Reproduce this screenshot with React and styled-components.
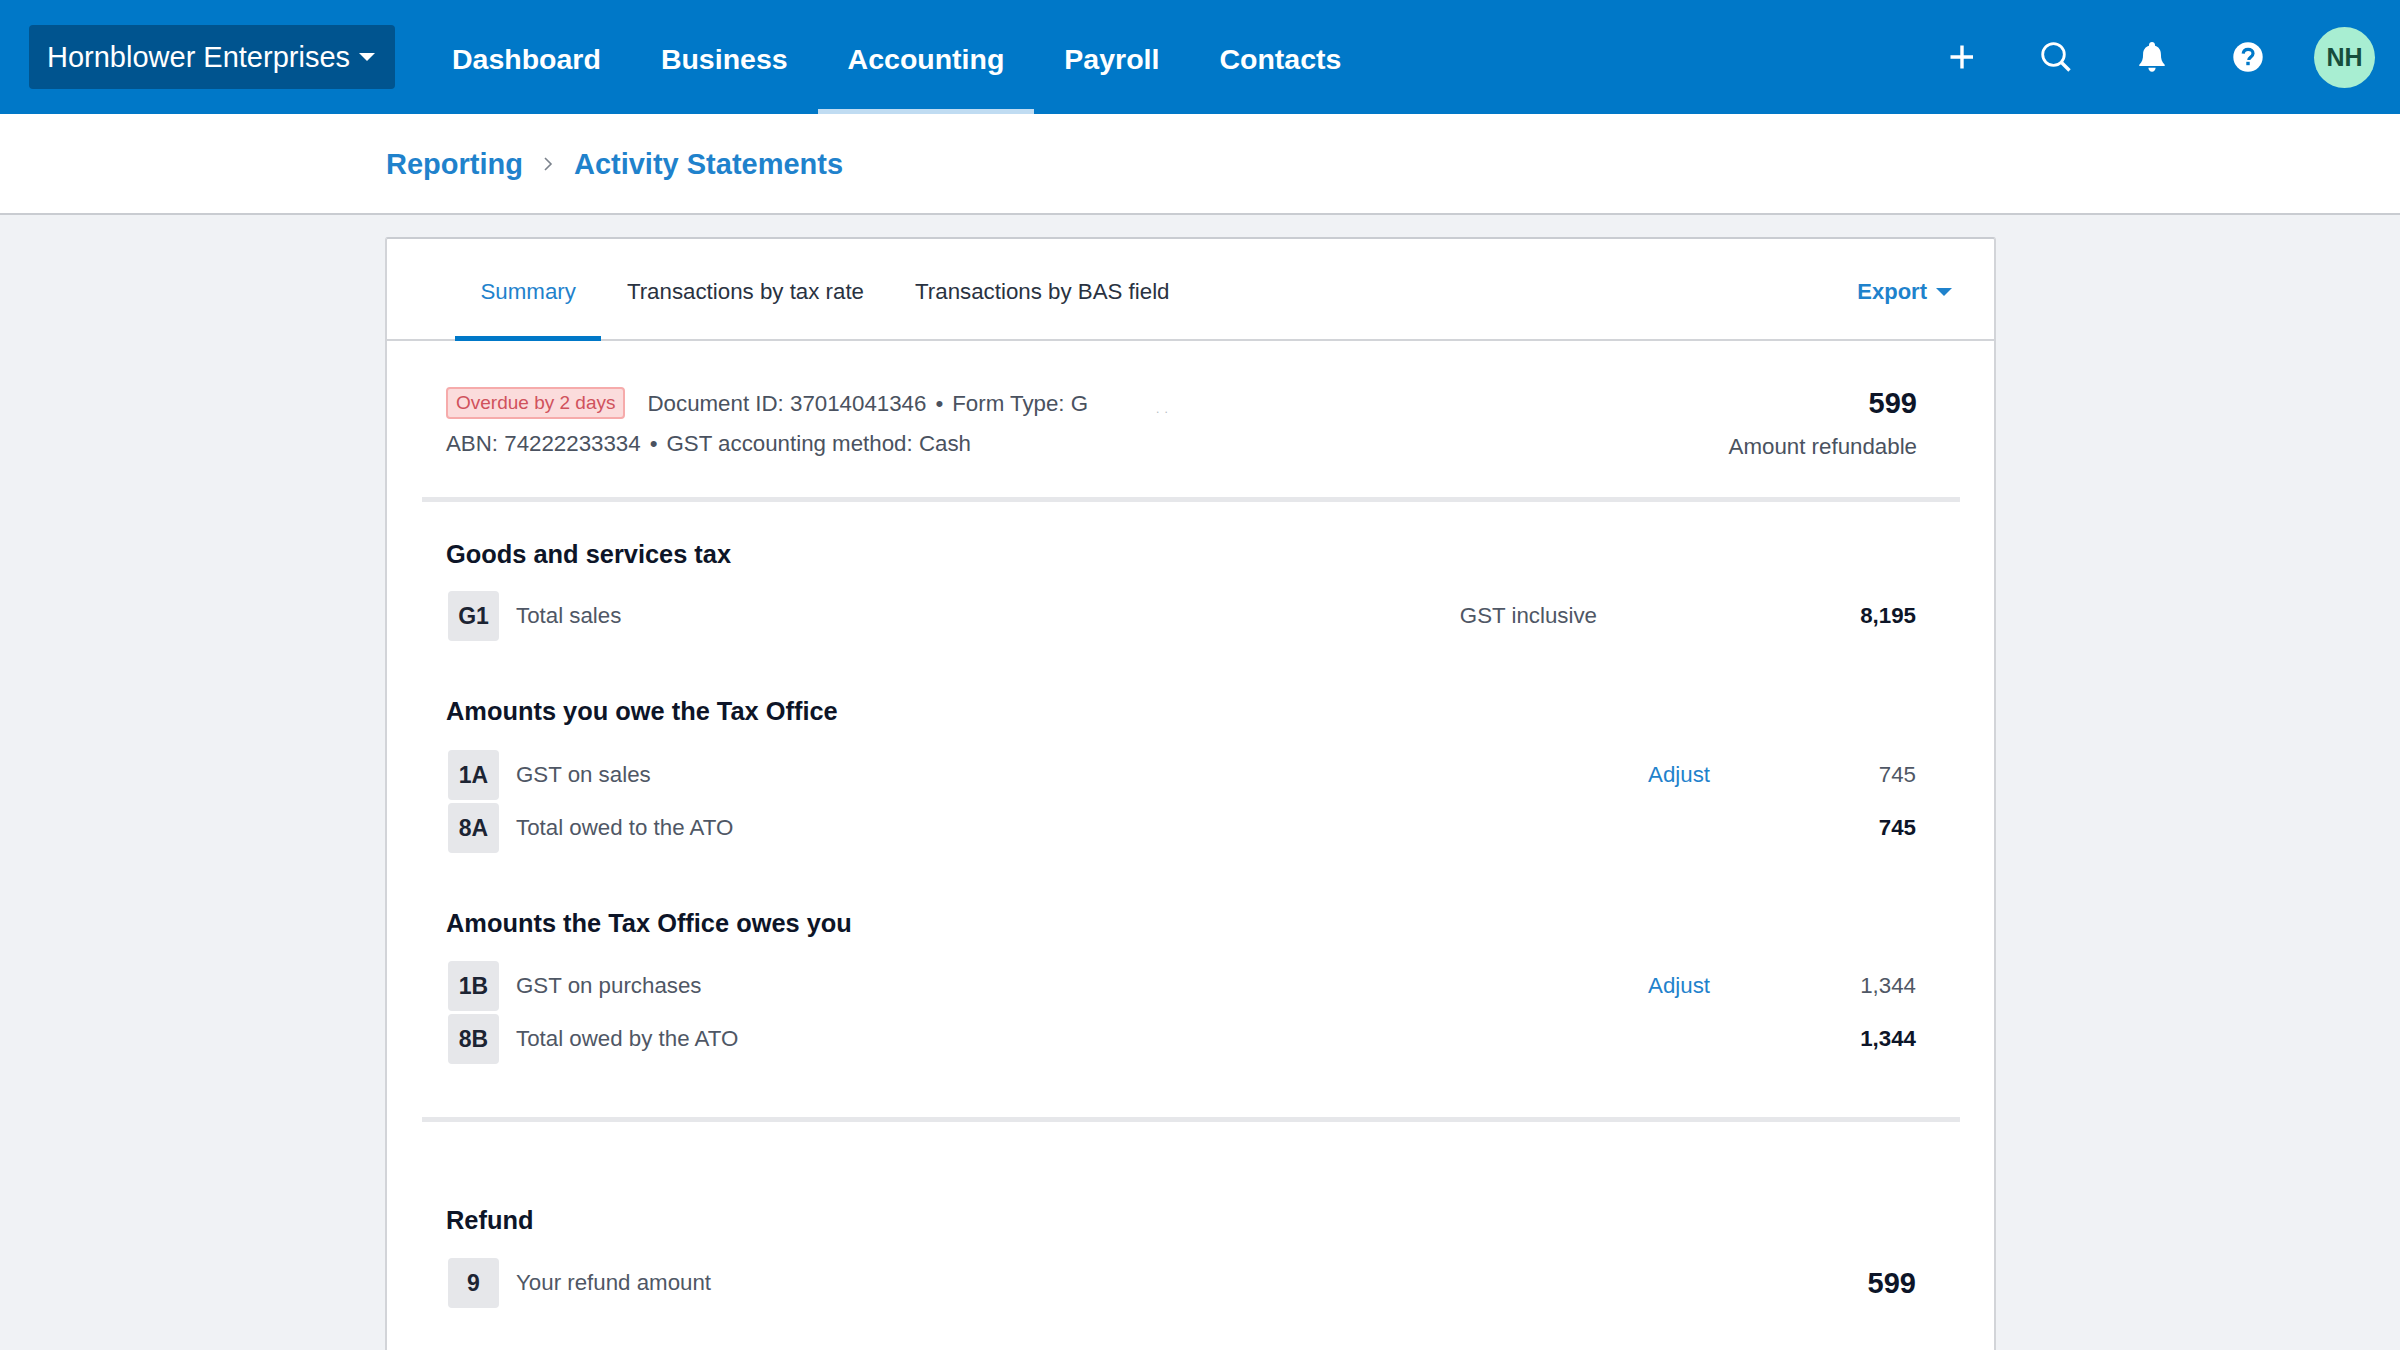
import React from 'react';
import styled, { createGlobalStyle } from 'styled-components';

const GlobalStyle = createGlobalStyle`
  html, body {
    margin: 0;
    height: 1350px;
    overflow: hidden;
    background: #f0f2f5;
    font-family: "Liberation Sans", Arial, sans-serif;
  }
`;

const TopNav = styled.header`
  display: flex;
  align-items: center;
  height: 114px;
  padding: 0 25px 0 29px;
  background: #0078c8;
  color: #fff;
`;

const OrgButton = styled.button`
  display: flex;
  align-items: center;
  gap: 9px;
  width: 366px;
  height: 64px;
  padding: 0 0 0 18px;
  margin-right: 27px;
  border: 0;
  border-radius: 4px;
  background: #00548f;
  color: #fff;
  font: 29px "Liberation Sans", Arial, sans-serif;
`;

const Caret = styled.span`
  width: 0;
  height: 0;
  border-left: ${p => p.$size}px solid transparent;
  border-right: ${p => p.$size}px solid transparent;
  border-top: ${p => p.$size}px solid ${p => p.$color};
`;

const NavItem = styled.a`
  display: flex;
  align-items: center;
  align-self: stretch;
  padding: 9px 30px 0;
  font-size: 28.5px;
  font-weight: 700;
  border-bottom: 5px solid ${p => (p.$active ? '#c0dcf2' : 'transparent')};
`;

const NavIcons = styled.div`
  display: flex;
  align-items: center;
  margin-left: auto;
`;

const IconSlot = styled.span`
  display: flex;
  justify-content: center;
  width: 96px;
  svg { display: block; }
`;

const Avatar = styled.span`
  display: flex;
  align-items: center;
  justify-content: center;
  width: 61px;
  height: 61px;
  margin-left: 18px;
  border-radius: 50%;
  background: #a8eed2;
  color: #174d3c;
  font-size: 25px;
  font-weight: 700;
`;

const Crumbs = styled.nav`
  display: flex;
  align-items: center;
  height: 98px;
  padding: 1px 0 0 386px;
  background: #fff;
  border-bottom: 2px solid #c9ccd1;
  color: #1f82cc;
  font-size: 29px;
  font-weight: 700;
`;

const CrumbSep = styled.span`
  width: 10px;
  margin: 0 21px 0 20px;
  svg { display: block; }
`;

const Card = styled.main`
  width: 1611px;
  height: 1113px;
  margin: 22px 0 0 385px;
  box-sizing: border-box;
  background: #fff;
  border: 2px solid #d2d4d8;
  border-top-color: #c9ccd1;
  border-bottom: 0;
  border-radius: 3px 3px 0 0;
`;

const TabBar = styled.div`
  display: flex;
  align-items: stretch;
  height: 100px;
  padding: 0 42px 0 68px;
  border-bottom: 2px solid #d2d4d8;
`;

const Tab = styled.a`
  display: flex;
  align-items: center;
  margin-bottom: -2px;
  padding: 9px 25.5px 0;
  font-size: 22.3px;
  color: ${p => (p.$active ? '#1f82cc' : '#293241')};
  border-bottom: 5px solid ${p => (p.$active ? '#0078c8' : 'transparent')};
`;

const ExportLink = styled.a`
  display: flex;
  align-items: center;
  gap: 9px;
  margin-left: auto;
  padding-top: 5px;
  color: #1f82cc;
  font-size: 22px;
  font-weight: 700;
`;

const Meta = styled.section`
  display: flex;
  justify-content: space-between;
  height: 156px;
  box-sizing: border-box;
  padding: 46px 77px 0 59px;
`;

const MetaLine = styled.div`
  display: flex;
  align-items: center;
  height: 32px;
  margin-bottom: 8px;
  font-size: 22.3px;
  color: #4a5260;
`;

const MetaText = styled.span`
  padding-top: 2px;
`;

const MetaDot = styled.span`
  margin: 0 9px;
`;

const Overdue = styled.span`
  display: flex;
  align-items: center;
  height: 32px;
  box-sizing: border-box;
  padding: 0 8px;
  margin-right: 22px;
  background: #fbdcdc;
  border: 2px solid #f6abab;
  border-radius: 4px;
  color: #d0525c;
  font-size: 19px;
`;

const Blemish = styled.span`
  margin: 12px 0 0 68px;
  color: #b4bac2;
  font-size: 12px;
  letter-spacing: 5px;
`;

const Totals = styled.div`
  text-align: right;
`;

const BigAmount = styled.div`
  font-size: 29px;
  font-weight: 700;
  line-height: 32px;
  color: #0d1528;
`;

const TotalsLabel = styled.div`
  margin-top: 12px;
  font-size: 22.3px;
  line-height: 32px;
  color: #4a5260;
`;

const Divider = styled.hr`
  height: 5px;
  margin: ${p => p.$top || 0}px 34px 0 35px;
  border: 0;
  background: #e6e7ea;
`;

const Section = styled.section`
  padding: 0 78px 0 59px;
  margin-top: ${p => p.$top}px;
`;

const Heading = styled.h2`
  margin: 0 0 ${p => p.$gap || 23}px;
  font-size: 25.4px;
  line-height: 30px;
  font-weight: 700;
  color: #0d1528;
`;

const Row = styled.div`
  display: flex;
  align-items: center;
  height: 50px;
  margin-bottom: 3px;
  font-size: 22.3px;
  color: #4f5765;
`;

const Chip = styled.span`
  display: flex;
  align-items: center;
  justify-content: center;
  flex: none;
  width: 51px;
  height: 50px;
  margin: 0 17px 0 2px;
  border-radius: 4px;
  background: #e6e7ea;
  color: #1c2433;
  font-size: 23px;
  font-weight: 700;
`;

const RowLabel = styled.span`
  flex: 1;
`;

const RowNote = styled.span`
  margin-right: ${p => p.$right}px;
  color: ${p => (p.$link ? '#1f82cc' : '#4f5765')};
`;

const Amount = styled.span`
  flex: 0 0 206px;
  text-align: right;
  font-size: ${p => (p.$large ? 29 : 22.3)}px;
  font-weight: ${p => (p.$bold ? 700 : 400)};
  color: ${p => (p.$bold ? '#0d1528' : '#4f5765')};
`;

const PlusIcon = () => (
  <svg width="26" height="26" viewBox="-2 0 26 26" fill="none" stroke="#fff" strokeWidth="3.4">
    <path d="M13 1.5v23M1.5 13h23" />
  </svg>
);

const SearchIcon = () => (
  <svg width="30" height="30" viewBox="0 0 30 30" fill="none" stroke="#fff">
    <circle cx="12.5" cy="12.5" r="10.8" strokeWidth="2.8" />
    <path d="M20.5 20.5l8 8" strokeWidth="3.4" />
  </svg>
);

const BellIcon = () => (
  <svg width="26" height="30" viewBox="0 0 26 30" fill="#fff">
    <path d="M13 0c1.7 0 3 1.2 3 2.9v.8c3.9 1.2 5.9 4.4 5.9 8.3 0 5 1 8 3.6 10.4.5.5.5 1.6-.7 1.6H1.2c-1.2 0-1.2-1.1-.7-1.6C3.1 20 4.1 17 4.1 12c0-3.9 2-7.1 5.9-8.3v-.8C10 1.2 11.3 0 13 0z" />
    <path d="M9.4 25.7h7.2c0 2.3-1.6 4-3.6 4s-3.6-1.7-3.6-4z" />
  </svg>
);

const HelpIcon = () => (
  <svg width="30" height="30" viewBox="0 0 30 30">
    <circle cx="15" cy="15" r="14.7" fill="#fff" />
    <path d="M10.2 11.6c.3-2.8 2.2-4.2 4.9-4.2 2.9 0 4.9 1.6 4.9 4 0 3.5-4 3.6-4.2 6.6" fill="none" stroke="#0078c8" strokeWidth="3.2" />
    <rect x="13.3" y="19.8" width="3.4" height="3.4" fill="#0078c8" />
  </svg>
);

const ChevronIcon = () => (
  <svg width="10" height="16" viewBox="0 0 10 16" fill="none" stroke="#7b828c" strokeWidth="1.6">
    <path d="M2 2l6 6-6 6" />
  </svg>
);

const navItems = ['Dashboard', 'Business', 'Accounting', 'Payroll', 'Contacts'];
const tabs = ['Summary', 'Transactions by tax rate', 'Transactions by BAS field'];

const StatementRow = ({ code, label, note, noteRight = 0, link, amount, bold, large }) => (
  <Row>
    <Chip>{code}</Chip>
    <RowLabel>{label}</RowLabel>
    {note && <RowNote $right={noteRight} $link={link}>{note}</RowNote>}
    <Amount $bold={bold} $large={large}>{amount}</Amount>
  </Row>
);

export default function App() {
  return (
    <>
      <GlobalStyle />
      <TopNav>
        <OrgButton>
          Hornblower Enterprises
          <Caret $size={8} $color="#fff" />
        </OrgButton>
        {navItems.map(item => (
          <NavItem key={item} $active={item === 'Accounting'}>{item}</NavItem>
        ))}
        <NavIcons>
          <IconSlot><PlusIcon /></IconSlot>
          <IconSlot><SearchIcon /></IconSlot>
          <IconSlot><BellIcon /></IconSlot>
          <IconSlot><HelpIcon /></IconSlot>
          <Avatar>NH</Avatar>
        </NavIcons>
      </TopNav>

      <Crumbs>
        <span>Reporting</span>
        <CrumbSep><ChevronIcon /></CrumbSep>
        <span>Activity Statements</span>
      </Crumbs>

      <Card>
        <TabBar>
          {tabs.map(tab => (
            <Tab key={tab} $active={tab === 'Summary'}>{tab}</Tab>
          ))}
          <ExportLink>
            Export
            <Caret $size={8} $color="#1f82cc" />
          </ExportLink>
        </TabBar>

        <Meta>
          <div>
            <MetaLine>
              <Overdue>Overdue by 2 days</Overdue>
              <MetaText>Document ID: 37014041346<MetaDot>•</MetaDot>Form Type: G</MetaText>
              <Blemish>..</Blemish>
            </MetaLine>
            <MetaLine>
              <MetaText>ABN: 74222233334<MetaDot>•</MetaDot>GST accounting method: Cash</MetaText>
            </MetaLine>
          </div>
          <Totals>
            <BigAmount>599</BigAmount>
            <TotalsLabel>Amount refundable</TotalsLabel>
          </Totals>
        </Meta>

        <Divider />

        <Section $top={37}>
          <Heading $gap={22}>Goods and services tax</Heading>
          <StatementRow code="G1" label="Total sales" note="GST inclusive" noteRight={113} amount="8,195" bold />
        </Section>

        <Section $top={55}>
          <Heading $gap={24}>Amounts you owe the Tax Office</Heading>
          <StatementRow code="1A" label="GST on sales" note="Adjust" link amount="745" />
          <StatementRow code="8A" label="Total owed to the ATO" amount="745" bold />
        </Section>

        <Section $top={55}>
          <Heading>Amounts the Tax Office owes you</Heading>
          <StatementRow code="1B" label="GST on purchases" note="Adjust" link amount="1,344" />
          <StatementRow code="8B" label="Total owed by the ATO" amount="1,344" bold />
        </Section>

        <Divider $top={53} />

        <Section $top={83}>
          <Heading>Refund</Heading>
          <StatementRow code="9" label="Your refund amount" amount="599" bold large />
        </Section>
      </Card>
    </>
  );
}
